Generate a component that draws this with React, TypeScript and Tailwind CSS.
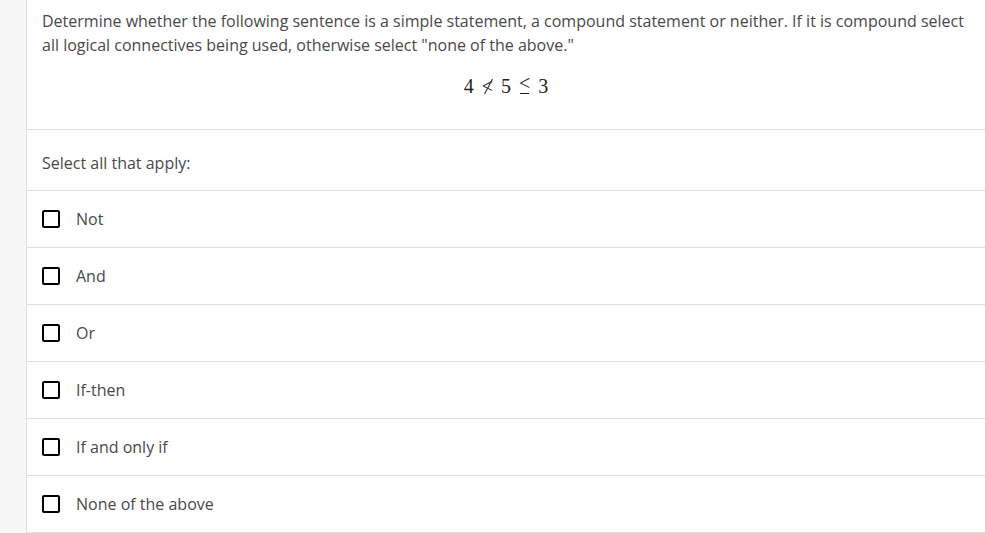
import { useState } from "react";

const options = ["Not", "And", "Or", "If-then", "If and only if", "None of the above"];

const App = () => {
	const [checked, setChecked] = useState<string[]>([]);

	const toggle = (opt: string) => {
		setChecked(c => (c.includes(opt) ? c.filter(o => o !== opt) : [...c, opt]));
	};

	return (
		<div
			className="flex min-h-[533px] w-full bg-white text-[#494949]"
			style={{ fontFamily: '"Open Sans", "Liberation Sans", sans-serif' }}
		>
			<div className="w-[27px] shrink-0 border-r border-[#e0e0e0] bg-[#f7f7f7]"></div>
			<div className="flex flex-1 flex-col">
				<section className="border-b border-[#dedede] px-[15px] pt-[9px] pb-[31px]">
					<p className="text-[16px] leading-[24px]">
						Determine whether the following sentence is a simple statement, a compound
						statement or neither. If it is compound select all logical connectives being
						used, otherwise select "none of the above."
					</p>
					{/* 4 \not< 5 \leq 3 */}
					<div
						className="mt-[17px] flex items-center justify-center gap-[8px] text-[20px] leading-[24px] text-[#222]"
						style={{ fontFamily: '"Liberation Serif", "DejaVu Serif", serif' }}
					>
						<span>4</span>
						<span className="relative inline-block">
							<span>&lt;</span>
							<span className="absolute left-[6px] top-[4px] h-[17px] w-[1.3px] rotate-[28deg] bg-[#222]"></span>
						</span>
						<span>5</span>
						<span className="relative inline-block">
							<span className="relative top-[-3px]">&lt;</span>
							<span className="absolute bottom-[4px] left-[1px] right-[1px] h-[1.3px] bg-[#222]"></span>
						</span>
						<span>3</span>
					</div>
				</section>
				<div className="flex h-[61px] items-center border-b border-[#dedede] px-[15px] pt-[5px] text-[16px]">
					Select all that apply:
				</div>
				<ul className="flex flex-col">
					{options.map(opt => (
						<li
							key={opt}
							className="flex h-[57px] cursor-pointer items-center gap-[16px] border-b border-[#dedede] px-[15px] text-[16px]"
							onClick={() => toggle(opt)}
						>
							<span className="flex h-[18px] w-[18px] items-center justify-center rounded-[2px] border-[2.5px] border-black">
								{checked.includes(opt) && <span className="h-[8px] w-[8px] bg-black"></span>}
							</span>
							<span>{opt}</span>
						</li>
					))}
				</ul>
			</div>
		</div>
	);
};

export default App;
